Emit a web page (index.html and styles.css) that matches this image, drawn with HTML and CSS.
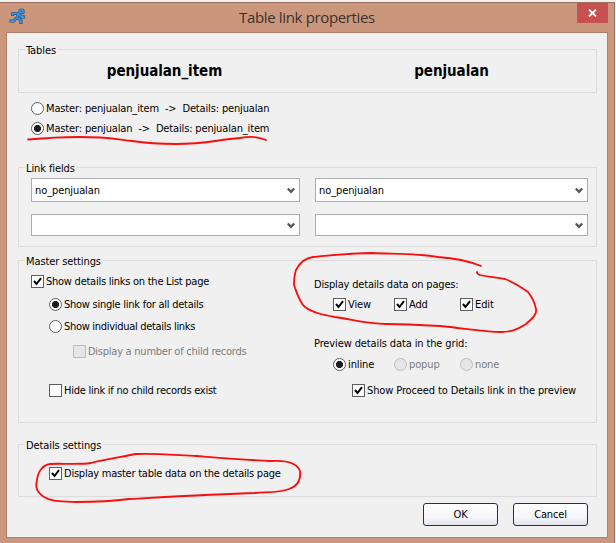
FILE: index.html
```html
<!DOCTYPE html>
<html lang="en">
<head>
<meta charset="utf-8">
<title>Table link properties</title>
<link rel="stylesheet" href="styles.css">
</head>
<body>
<div class="window">
  <header class="titlebar">
    <svg class="app-icon" width="18" height="17" viewBox="0 0 18 17"><g fill="none" stroke-linejoin="round"><path d="M12 2.200h3v2.500h-3zM4.500 8V5.500h6L9 10l4 2v4M10.500 6l3 3h3.500M8.500 9.500L6 13H1.500" stroke="#254c70" stroke-width="3"/><path d="M12 2.200h3v2.500h-3zM4.500 7.500V5.500h6L9 10l4 2v3.500M10.500 6l3 3h3M8.500 9.500L6 13H2" stroke="#3b8fe0" stroke-width="1.800"/></g></svg>
    <h1>Table link properties</h1>
    <span class="close"><svg width="9" height="8" viewBox="0 0 9 8"><path d="M1 .5l7 7M8 .5l-7 7" stroke="#fff" stroke-width="1.8"/></svg></span>
  </header>
  <main class="client">
    <section class="group tables">
      <h2>Tables</h2>
      <strong>penjualan_item</strong>
      <strong>penjualan</strong>
    </section>
    <div class="direction">
      <label><i class="radio"></i><span>Master: penjualan_item&nbsp; -&gt;&nbsp; Details: penjualan</span></label>
      <label><i class="radio on"></i><span>Master: penjualan&nbsp; -&gt;&nbsp; Details: penjualan_item</span></label>
    </div>
    <section class="group fields">
      <h2>Link fields</h2>
      <div class="select">no_penjualan<svg width="8" height="7" viewBox="0 0 8 7"><path d="M.8 1.5L4 4.8l3.2-3.3" fill="none" stroke="#555" stroke-width="2.2"/></svg></div>
      <div class="select">no_penjualan<svg width="8" height="7" viewBox="0 0 8 7"><path d="M.8 1.5L4 4.8l3.2-3.3" fill="none" stroke="#555" stroke-width="2.2"/></svg></div>
      <div class="select"><svg width="8" height="7" viewBox="0 0 8 7"><path d="M.8 1.5L4 4.8l3.2-3.3" fill="none" stroke="#555" stroke-width="2.2"/></svg></div>
      <div class="select"><svg width="8" height="7" viewBox="0 0 8 7"><path d="M.8 1.5L4 4.8l3.2-3.3" fill="none" stroke="#555" stroke-width="2.2"/></svg></div>
    </section>
    <section class="group master">
      <h2>Master settings</h2>
      <div class="links">
        <label class="r1"><i class="check"><svg viewBox="0 0 11 11"><path d="M2 5l2.5 3L9 2.2" fill="none" stroke="#000" stroke-width="2"/></svg></i><span>Show details links on the List page</span></label>
        <label class="r2 in1"><i class="radio on"></i><span>Show single link for all details</span></label>
        <label class="r3 in1"><i class="radio"></i><span>Show individual details links</span></label>
        <label class="r4 in2 off"><i class="check"></i><span>Display a number of child records</span></label>
        <label class="r5 in1"><i class="check"></i><span>Hide link if no child records exist</span></label>
      </div>
      <div class="display">
        <p class="p1">Display details data on pages:</p>
        <div class="options pages">
          <label><i class="check"><svg viewBox="0 0 11 11"><path d="M2 5l2.5 3L9 2.2" fill="none" stroke="#000" stroke-width="2"/></svg></i><span>View</span></label>
          <label><i class="check"><svg viewBox="0 0 11 11"><path d="M2 5l2.5 3L9 2.2" fill="none" stroke="#000" stroke-width="2"/></svg></i><span>Add</span></label>
          <label><i class="check"><svg viewBox="0 0 11 11"><path d="M2 5l2.5 3L9 2.2" fill="none" stroke="#000" stroke-width="2"/></svg></i><span>Edit</span></label>
        </div>
        <p class="p2">Preview details data in the grid:</p>
        <div class="options modes">
          <label><i class="radio on"></i><span>inline</span></label>
          <label class="off"><i class="radio"></i><span>popup</span></label>
          <label class="off"><i class="radio"></i><span>none</span></label>
        </div>
        <label class="proceed"><i class="check"><svg viewBox="0 0 11 11"><path d="M2 5l2.5 3L9 2.2" fill="none" stroke="#000" stroke-width="2"/></svg></i><span>Show Proceed to Details link in the preview</span></label>
      </div>
    </section>
    <section class="group details">
      <h2>Details settings</h2>
      <label><i class="check"><svg viewBox="0 0 11 11"><path d="M2 5l2.5 3L9 2.2" fill="none" stroke="#000" stroke-width="2"/></svg></i><span>Display master table data on the details page</span></label>
    </section>
    <footer><button>OK</button><button>Cancel</button></footer>
  </main>
</div>
<svg class="ink" width="616" height="543" viewBox="0 0 616 543">
  <path d="M28 139.500C45 138 62 137 79 137C109 137 113 139 132 141C145 143 157 144 176 144C205 144 216 140 240 138C252 136 258 137 266 140"/>
  <path d="M481 266C466 260 453 258 438 257C417 253 394 254 372 253C350 253 326 256 313 257C305 258 300 262 296 270C294 276 294 281 294 285C297 293 299 302 305 307C313 313 324 315 335 317C354 320 369 324 386 324C405 324 423 325 440 326C463 328 482 332 501 332C512 332 518 329 526 324C533 318 537 314 536 309C535 304 532 297 528 292C520 286 513 282 505 279C496 277 487 277 480 275Q477 274 477 272"/>
  <path d="M50 464C60 463 77 465 91 463C105 459 122 457 136 454C153 453 175 455 197 456C223 458 248 460 270 461C286 460 297 462 300 471C301 480 298 486 289 489C279 493 267 492 255 493C219 494 166 497 129 499C107 502 91 502 76 502C61 501 52 502 44 497C37 492 35 488 37 480C38 471 43 465 50 464Z"/>
</svg>
</body>
</html>
```
FILE: styles.css
```css
* { box-sizing: border-box; }
body {
  margin: 0;
  width: 616px;
  height: 543px;
  overflow: hidden;
  position: relative;
  background: #f0f0f0;
  padding-top: 2px;
  font: 11px/13px Tahoma, "DejaVu Sans Condensed", sans-serif;
  color: #000;
}
.window {
  width: 615px;
  height: 541px;
  background: #cb977c;
  border-top: 1px solid #9c705a;
  border-right: 1px solid #9c705a;
  padding: 0 6px 0;
}
.titlebar {
  height: 29px;
  display: grid;
  grid-template-columns: 31px 1fr 31px;
  align-items: start;
}
.app-icon { margin: 5px 0 0 2px; }
h1 {
  margin: 3px 0 0;
  font: 15px/22px "Open Sans", sans-serif;
  letter-spacing: -.35px;
  text-align: center;
  color: #3b302b;
}
.close {
  height: 20px;
  background: #c75050;
  display: flex;
  align-items: center;
  justify-content: center;
}
.client {
  height: 506px;
  background: #f0f0f0;
  border: 1px solid #ae8069;
  padding: 16px 10px 0 11px;
}
.group { border: 1px solid #dcdcdc; position: relative; width: 579px; }
h2 {
  position: absolute;
  left: 6px;
  top: -6px;
  margin: 0;
  padding: 0 2px 0 1px;
  background: #f0f0f0;
  font: inherit;
  letter-spacing: -.1px;
  white-space: nowrap;
}
.tables {
  height: 44px;
  display: grid;
  grid-template-columns: 291px 283px;
  text-align: center;
  padding-top: 12px;
}
.tables strong { font: bold 15px/18px "DejaVu Sans Condensed", sans-serif; letter-spacing: -.05px; }
.direction { height: 74px; padding: 9px 0 0 13px; letter-spacing: -.15px; }
label { display: flex; align-items: center; gap: 2px; white-space: nowrap; height: 13px; }
.direction label { margin-bottom: 7px; }
label span { display: block; line-height: 13px; }
.check, .radio { flex: none; width: 13px; height: 13px; border: 1px solid #5e5e5e; background: #fff; }
.check svg { display: block; width: 11px; height: 11px; }
.radio { border-radius: 50%; }
.radio.on { background: radial-gradient(circle, #1e1e1e 3.2px, #fff 3.9px); }
.off { color: #7b7b7b; }
.off i { border-color: #bcbcbc; background: #e6e6e6; }
.fields {
  height: 80px;
  padding: 10px 9px 0 12px;
  display: grid;
  grid-template: 24px 22px / 269px 273px;
  gap: 12px 15px;
}
.select {
  border: 1px solid #abadb3;
  background: #fff;
  padding: 0 4px 0 3px;
  display: flex;
  align-items: center;
  letter-spacing: -.1px;
}
.select svg { margin-left: auto; }
.master {
  height: 163px;
  margin-top: 13px;
  padding-left: 12px;
  display: grid;
  grid-template-columns: 283px 1fr;
}
.links { letter-spacing: -.25px; }
.display { letter-spacing: -.12px; }
.r1 { margin-top: 14px; }
.r2 { margin-top: 10px; }
.r3 { margin-top: 9px; letter-spacing: -.3px; }
.r4 { margin-top: 12px; }
.r5 { margin-top: 26px; }
.in1 { margin-left: 18px; }
.in2 { margin-left: 42px; }
p { margin: 0; white-space: nowrap; }
.p1 { margin-top: 17px; letter-spacing: -.18px; }
.p2 { margin-top: 26px; }
.options { display: grid; grid-template-columns: 61px 66px 60px; margin-left: 19px; }
.pages { margin-top: 7px; }
.modes { margin-top: 8px; }
.proceed { margin: 13px 0 0 38px; }
.details { height: 53px; margin-top: 21px; padding: 22px 0 0 30px; }
.details label { letter-spacing: -.23px; }
footer { display: flex; gap: 15px; justify-content: flex-end; padding: 6px 9px 0 0; }
button {
  width: 75px;
  height: 23px;
  padding: 0;
  border: 1px solid #003c74;
  border-radius: 3px;
  background: linear-gradient(#fff, #f6f6fa 60%, #e4e4ee);
  font: inherit;
  letter-spacing: -.15px;
  color: #000;
}
.ink { position: absolute; left: 0; top: 0; pointer-events: none; }
.ink path { fill: none; stroke: #fb0d0d; stroke-width: 1.8; stroke-linecap: round; }
```
